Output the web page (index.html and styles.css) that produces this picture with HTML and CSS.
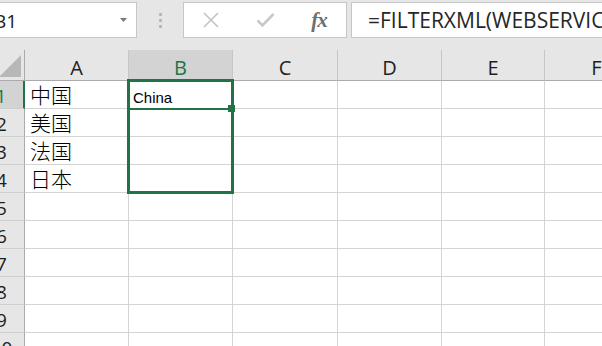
FILE: index.html
```html
<!DOCTYPE html>
<html>
<head>
<meta charset="utf-8">
<link rel="stylesheet" href="styles.css">
</head>
<body>
<div class="app">
  <div class="toolbar">
    <div class="namebox">
      <span class="nb-text">B1</span>
      <svg class="caret" width="7" height="4" viewBox="0 0 7 4"><polygon points="0,0 7,0 3.5,4" fill="#7a7a7a"/></svg>
    </div>
    <div class="grip"><i></i><i></i><i></i></div>
    <div class="fbtns">
      <span class="fbtn">
        <svg width="18" height="16" viewBox="0 0 18 16"><path d="M2 1 L16 15 M16 1 L2 15" stroke="#c3c3c3" stroke-width="1.6" fill="none"/></svg>
      </span>
      <span class="fbtn">
        <svg width="19" height="16" viewBox="0 0 19 16"><path d="M1.5 8.5 L6.5 13.5 L17.5 2" stroke="#c8c8c8" stroke-width="2.6" fill="none"/></svg>
      </span>
      <span class="fbtn fx">fx</span>
    </div>
    <div class="formula">=FILTERXML(WEBSERVICE("http://fanyi.youdao.com/translate?&amp;i="&amp;A1&amp;"&amp;doctype=xml"),"//translation")</div>
  </div>
  <div class="sheet">
    <div class="corner"><svg width="42" height="30" viewBox="0 0 42 30"><polygon points="39,5 39,27 17,27" fill="#b7b7b7"/></svg></div>
    <div class="ch">A</div>
    <div class="ch sel-h">B</div>
    <div class="ch">C</div>
    <div class="ch">D</div>
    <div class="ch">E</div>
    <div class="ch">F</div>

    <div class="rh sel-r">1</div>
    <div class="c cjk">中国</div>
    <div class="c latin">China</div>
    <div class="c"></div><div class="c"></div><div class="c"></div><div class="c"></div>

    <div class="rh">2</div>
    <div class="c cjk">美国</div>
    <div class="c"></div><div class="c"></div><div class="c"></div><div class="c"></div><div class="c"></div>

    <div class="rh">3</div>
    <div class="c cjk">法国</div>
    <div class="c"></div><div class="c"></div><div class="c"></div><div class="c"></div><div class="c"></div>

    <div class="rh">4</div>
    <div class="c cjk">日本</div>
    <div class="c"></div><div class="c"></div><div class="c"></div><div class="c"></div><div class="c"></div>

    <div class="rh">5</div>
    <div class="c"></div><div class="c"></div><div class="c"></div><div class="c"></div><div class="c"></div><div class="c"></div>
    <div class="rh">6</div>
    <div class="c"></div><div class="c"></div><div class="c"></div><div class="c"></div><div class="c"></div><div class="c"></div>
    <div class="rh">7</div>
    <div class="c"></div><div class="c"></div><div class="c"></div><div class="c"></div><div class="c"></div><div class="c"></div>
    <div class="rh">8</div>
    <div class="c"></div><div class="c"></div><div class="c"></div><div class="c"></div><div class="c"></div><div class="c"></div>
    <div class="rh">9</div>
    <div class="c"></div><div class="c"></div><div class="c"></div><div class="c"></div><div class="c"></div><div class="c"></div>
    <div class="rh">10</div>
    <div class="c"></div><div class="c"></div><div class="c"></div><div class="c"></div><div class="c"></div><div class="c"></div>

    <div class="sel-box"></div>
    <div class="active-line"></div>
    <div class="handle"></div>
  </div>
</div>
</body>
</html>
```
FILE: styles.css
```css
html, body {
  margin: 0;
  padding: 0;
  background: #ffffff;
  overflow: hidden;
  width: 602px;
  height: 346px;
}
.app {
  margin-left: -18px;
  width: 680px;
  font-family: "Open Sans", "Noto Sans", sans-serif;
}
.toolbar {
  height: 50px;
  box-sizing: border-box;
  padding-top: 2px;
  background: #e6e6e6;
  display: flex;
  align-items: flex-start;
}
.namebox {
  width: 155px;
  height: 36px;
  box-sizing: border-box;
  background: #fff;
  border: 1px solid #c6c6c6;
  display: flex;
  align-items: center;
  justify-content: space-between;
  padding-left: 11px;
  padding-right: 9px;
  color: #222;
}
.nb-text {
  font-size: 19px;
  margin-top: 1px;
}
.grip {
  width: 46px;
  height: 36px;
  display: flex;
  flex-direction: column;
  align-items: center;
  justify-content: center;
  gap: 3px;
}
.grip i {
  display: block;
  width: 3px;
  height: 3px;
  border-radius: 1px;
  background: #b3b3b3;
}
.fbtns {
  width: 164px;
  height: 36px;
  box-sizing: border-box;
  background: #fff;
  border: 1px solid #c6c6c6;
  display: flex;
  align-items: center;
}
.fbtn {
  width: 54px;
  display: flex;
  justify-content: center;
  align-items: center;
}
.fx {
  font-family: "Liberation Serif", "DejaVu Serif", serif;
  font-style: italic;
  font-weight: bold;
  font-size: 21px;
  color: #6e6e6e;
  letter-spacing: -1px;
}
.formula {
  margin-left: 4px;
  flex: 1;
  height: 36px;
  box-sizing: border-box;
  background: #fff;
  border: 1px solid #c6c6c6;
  padding-left: 16px;
  font-size: 21px;
  line-height: 34px;
  color: #262626;
  white-space: nowrap;
  overflow: hidden;
}
.sheet {
  position: relative;
  display: grid;
  grid-template-columns: 43px 104px 104px 105px 104px 103px 104px;
  grid-template-rows: 31px repeat(10, 28px);
}
.corner {
  background: #e6e6e6;
  border-right: 1px solid #ababab;
  border-bottom: 1px solid #ababab;
  box-sizing: border-box;
}
.corner svg { display: block; }
.ch {
  background: #e6e6e6;
  border-right: 1px solid #c6c6c6;
  border-bottom: 1px solid #ababab;
  box-sizing: border-box;
  display: flex;
  justify-content: center;
  align-items: center;
  padding-top: 4px;
  font-size: 20px;
  color: #1e1e1e;
}
.ch.sel-h {
  background: #d3d3d3;
  color: #217346;
}
.rh {
  background: #e6e6e6;
  border-right: 1px solid #ababab;
  border-bottom: 1px solid #cfcfcf;
  box-sizing: border-box;
  display: flex;
  justify-content: center;
  align-items: center;
  padding-top: 2px;
  padding-right: 3px;
  font-size: 19px;
  color: #1e1e1e;
}
.rh.sel-r {
  background: #d3d3d3;
  color: #217346;
  border-right: 2px solid #217346;
}
.c {
  border-right: 1px solid #d4d4d4;
  border-bottom: 1px solid #d4d4d4;
  box-sizing: border-box;
  display: flex;
  align-items: flex-end;
  overflow: hidden;
  white-space: nowrap;
}
.cjk {
  font-family: "Noto Sans CJK SC", sans-serif;
  font-weight: 300;
  font-size: 21px;
  line-height: 25px;
  padding-left: 5px;
  padding-bottom: 1px;
  color: #000;
}
.latin {
  font-family: "Liberation Sans", Arial, sans-serif;
  font-size: 15px;
  line-height: 17px;
  padding-left: 4px;
  padding-bottom: 2px;
  color: #000;
}
.sel-box {
  position: absolute;
  left: 145px;
  top: 29px;
  width: 107px;
  height: 115px;
  box-sizing: border-box;
  border: 3px solid #217346;
}
.active-line {
  position: absolute;
  left: 148px;
  top: 58px;
  width: 101px;
  height: 2px;
  background: #217346;
}
.handle {
  position: absolute;
  left: 246px;
  top: 55px;
  width: 7px;
  height: 7px;
  background: #217346;
}
```
